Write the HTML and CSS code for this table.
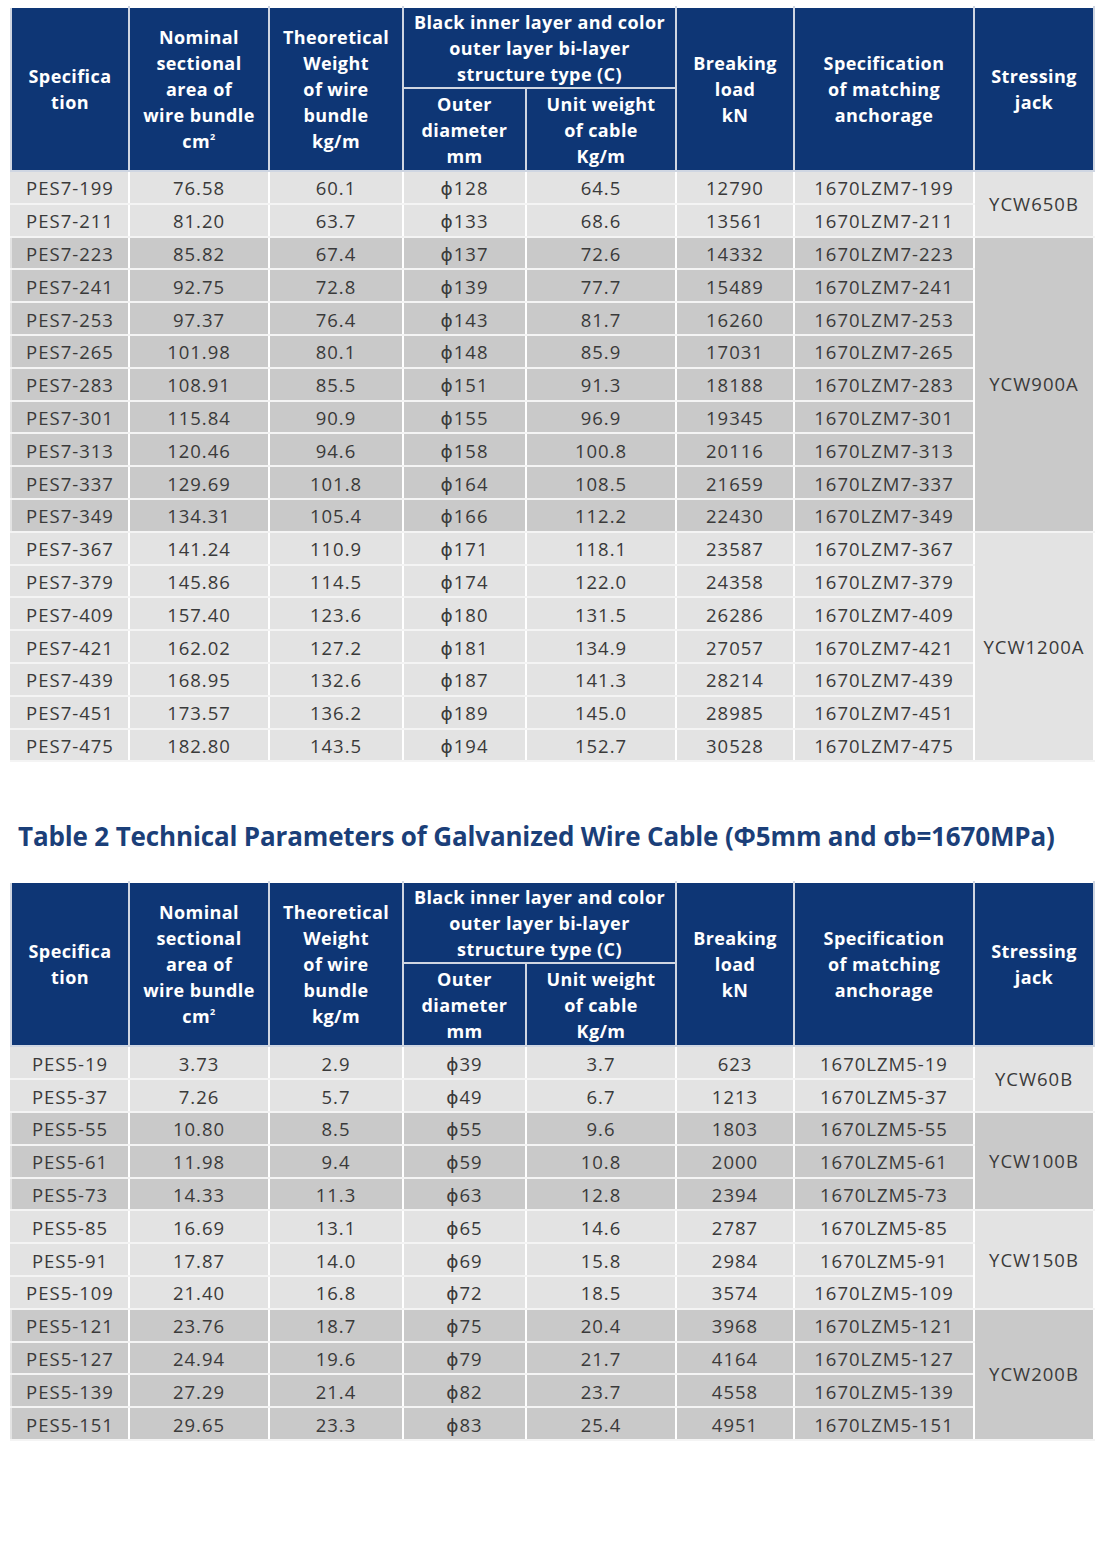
FILE: index.html
```html
<!DOCTYPE html>
<html lang="en">
<head>
<meta charset="utf-8">
<title>Technical Parameters</title>
<link rel="stylesheet" href="styles.css">
</head>
<body>
<div class="page">
<table class="spec">
  <colgroup>
    <col class="c1"><col class="c2"><col class="c3"><col class="c4"><col class="c5"><col class="c6"><col class="c7"><col class="c8">
  </colgroup>
  <thead>
    <tr class="h1">
      <th rowspan="2">Specifica<br>tion</th>
      <th rowspan="2">Nominal<br>sectional<br>area of<br>wire bundle<br>cm<sup>2</sup></th>
      <th rowspan="2">Theoretical<br>Weight<br>of wire<br>bundle<br>kg/m</th>
      <th colspan="2">Black inner layer and color<br>outer layer bi-layer<br>structure type (C)</th>
      <th rowspan="2">Breaking<br>load<br>kN</th>
      <th rowspan="2">Specification<br>of matching<br>anchorage</th>
      <th rowspan="2">Stressing<br>jack</th>
    </tr>
    <tr class="h2">
      <th>Outer<br>diameter<br>mm</th>
      <th>Unit weight<br>of cable<br>Kg/m</th>
    </tr>
  </thead>
  <tbody class="light">
    <tr><td>PES7-199</td><td>76.58</td><td>60.1</td><td>ϕ128</td><td>64.5</td><td>12790</td><td>1670LZM7-199</td><td rowspan="2" class="jack">YCW650B</td></tr>
    <tr><td>PES7-211</td><td>81.20</td><td>63.7</td><td>ϕ133</td><td>68.6</td><td>13561</td><td>1670LZM7-211</td></tr>
  </tbody>
  <tbody class="dark">
    <tr><td>PES7-223</td><td>85.82</td><td>67.4</td><td>ϕ137</td><td>72.6</td><td>14332</td><td>1670LZM7-223</td><td rowspan="9" class="jack">YCW900A</td></tr>
    <tr><td>PES7-241</td><td>92.75</td><td>72.8</td><td>ϕ139</td><td>77.7</td><td>15489</td><td>1670LZM7-241</td></tr>
    <tr><td>PES7-253</td><td>97.37</td><td>76.4</td><td>ϕ143</td><td>81.7</td><td>16260</td><td>1670LZM7-253</td></tr>
    <tr><td>PES7-265</td><td>101.98</td><td>80.1</td><td>ϕ148</td><td>85.9</td><td>17031</td><td>1670LZM7-265</td></tr>
    <tr><td>PES7-283</td><td>108.91</td><td>85.5</td><td>ϕ151</td><td>91.3</td><td>18188</td><td>1670LZM7-283</td></tr>
    <tr><td>PES7-301</td><td>115.84</td><td>90.9</td><td>ϕ155</td><td>96.9</td><td>19345</td><td>1670LZM7-301</td></tr>
    <tr><td>PES7-313</td><td>120.46</td><td>94.6</td><td>ϕ158</td><td>100.8</td><td>20116</td><td>1670LZM7-313</td></tr>
    <tr><td>PES7-337</td><td>129.69</td><td>101.8</td><td>ϕ164</td><td>108.5</td><td>21659</td><td>1670LZM7-337</td></tr>
    <tr><td>PES7-349</td><td>134.31</td><td>105.4</td><td>ϕ166</td><td>112.2</td><td>22430</td><td>1670LZM7-349</td></tr>
  </tbody>
  <tbody class="light">
    <tr><td>PES7-367</td><td>141.24</td><td>110.9</td><td>ϕ171</td><td>118.1</td><td>23587</td><td>1670LZM7-367</td><td rowspan="7" class="jack">YCW1200A</td></tr>
    <tr><td>PES7-379</td><td>145.86</td><td>114.5</td><td>ϕ174</td><td>122.0</td><td>24358</td><td>1670LZM7-379</td></tr>
    <tr><td>PES7-409</td><td>157.40</td><td>123.6</td><td>ϕ180</td><td>131.5</td><td>26286</td><td>1670LZM7-409</td></tr>
    <tr><td>PES7-421</td><td>162.02</td><td>127.2</td><td>ϕ181</td><td>134.9</td><td>27057</td><td>1670LZM7-421</td></tr>
    <tr><td>PES7-439</td><td>168.95</td><td>132.6</td><td>ϕ187</td><td>141.3</td><td>28214</td><td>1670LZM7-439</td></tr>
    <tr><td>PES7-451</td><td>173.57</td><td>136.2</td><td>ϕ189</td><td>145.0</td><td>28985</td><td>1670LZM7-451</td></tr>
    <tr><td>PES7-475</td><td>182.80</td><td>143.5</td><td>ϕ194</td><td>152.7</td><td>30528</td><td>1670LZM7-475</td></tr>
  </tbody>
</table>

<h2 class="title">Table 2 Technical Parameters of Galvanized Wire Cable (Φ5mm and σb=1670MPa)</h2>

<table class="spec">
  <colgroup>
    <col class="c1"><col class="c2"><col class="c3"><col class="c4"><col class="c5"><col class="c6"><col class="c7"><col class="c8">
  </colgroup>
  <thead>
    <tr class="h1">
      <th rowspan="2">Specifica<br>tion</th>
      <th rowspan="2">Nominal<br>sectional<br>area of<br>wire bundle<br>cm<sup>2</sup></th>
      <th rowspan="2">Theoretical<br>Weight<br>of wire<br>bundle<br>kg/m</th>
      <th colspan="2">Black inner layer and color<br>outer layer bi-layer<br>structure type (C)</th>
      <th rowspan="2">Breaking<br>load<br>kN</th>
      <th rowspan="2">Specification<br>of matching<br>anchorage</th>
      <th rowspan="2">Stressing<br>jack</th>
    </tr>
    <tr class="h2">
      <th>Outer<br>diameter<br>mm</th>
      <th>Unit weight<br>of cable<br>Kg/m</th>
    </tr>
  </thead>
  <tbody class="light">
    <tr><td>PES5-19</td><td>3.73</td><td>2.9</td><td>ϕ39</td><td>3.7</td><td>623</td><td>1670LZM5-19</td><td rowspan="2" class="jack">YCW60B</td></tr>
    <tr><td>PES5-37</td><td>7.26</td><td>5.7</td><td>ϕ49</td><td>6.7</td><td>1213</td><td>1670LZM5-37</td></tr>
  </tbody>
  <tbody class="dark">
    <tr><td>PES5-55</td><td>10.80</td><td>8.5</td><td>ϕ55</td><td>9.6</td><td>1803</td><td>1670LZM5-55</td><td rowspan="3" class="jack">YCW100B</td></tr>
    <tr><td>PES5-61</td><td>11.98</td><td>9.4</td><td>ϕ59</td><td>10.8</td><td>2000</td><td>1670LZM5-61</td></tr>
    <tr><td>PES5-73</td><td>14.33</td><td>11.3</td><td>ϕ63</td><td>12.8</td><td>2394</td><td>1670LZM5-73</td></tr>
  </tbody>
  <tbody class="light">
    <tr><td>PES5-85</td><td>16.69</td><td>13.1</td><td>ϕ65</td><td>14.6</td><td>2787</td><td>1670LZM5-85</td><td rowspan="3" class="jack">YCW150B</td></tr>
    <tr><td>PES5-91</td><td>17.87</td><td>14.0</td><td>ϕ69</td><td>15.8</td><td>2984</td><td>1670LZM5-91</td></tr>
    <tr><td>PES5-109</td><td>21.40</td><td>16.8</td><td>ϕ72</td><td>18.5</td><td>3574</td><td>1670LZM5-109</td></tr>
  </tbody>
  <tbody class="dark">
    <tr><td>PES5-121</td><td>23.76</td><td>18.7</td><td>ϕ75</td><td>20.4</td><td>3968</td><td>1670LZM5-121</td><td rowspan="4" class="jack">YCW200B</td></tr>
    <tr><td>PES5-127</td><td>24.94</td><td>19.6</td><td>ϕ79</td><td>21.7</td><td>4164</td><td>1670LZM5-127</td></tr>
    <tr><td>PES5-139</td><td>27.29</td><td>21.4</td><td>ϕ82</td><td>23.7</td><td>4558</td><td>1670LZM5-139</td></tr>
    <tr><td>PES5-151</td><td>29.65</td><td>23.3</td><td>ϕ83</td><td>25.4</td><td>4951</td><td>1670LZM5-151</td></tr>
  </tbody>
</table>
</div>
</body>
</html>
```

FILE: styles.css
```css
html, body {
  margin: 0;
  padding: 0;
  background: #ffffff;
}

.page {
  padding: 6px 7px 0 10px;
  font-family: "Open Sans", "DejaVu Sans", sans-serif;
}

.spec {
  width: 1083px;
  table-layout: fixed;
  border-collapse: collapse;
}

.c1 { width: 118px; }
.c2 { width: 140px; }
.c3 { width: 134px; }
.c4 { width: 123px; }
.c5 { width: 150px; }
.c6 { width: 118px; }
.c7 { width: 180px; }
.c8 { width: 120px; }

.spec th {
  background: #0e3675;
  color: #ffffff;
  font-weight: 700;
  font-size: 18px;
  line-height: 26px;
  letter-spacing: 0.4px;
  text-align: center;
  vertical-align: middle;
  border: 2px solid #cfd6e2;
  padding: 0;
}

.spec thead tr:first-child th {
  border-top-color: #ffffff;
}

.spec th sup {
  font-size: 9px;
  line-height: 0;
  vertical-align: 8px;
}

.h1 { height: 81px; }
.h2 { height: 83px; }

.spec td {
  font-size: 18.5px;
  color: #3a3a3a;
  letter-spacing: 1px;
  text-align: center;
  vertical-align: middle;
  height: 28.8px;
  padding: 2px 0 0;
  line-height: 22px;
  border: 2px solid #f4f4f4;
  border-left-color: #ffffff;
  border-right-color: #ffffff;
}

.spec td.jack { padding-top: 0; }

.light td { background: #e3e3e3; }
.dark td { background: #c9c9c9; }

.spec td:first-child { border-left-color: #e3e3e3; }

.title {
  margin: 58px 0 29px 8px;
  font-size: 26px;
  line-height: 32px;
  font-weight: 700;
  color: #1b3f79;
  letter-spacing: -0.15px;
  white-space: nowrap;
}
```
